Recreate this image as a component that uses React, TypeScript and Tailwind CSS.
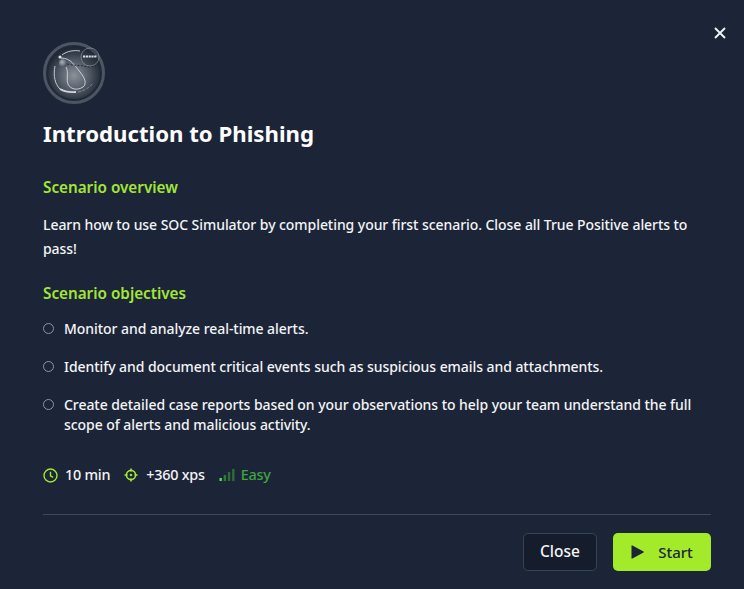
import React from "react";

function Logo() {
  return (
    <svg width="62" height="62" viewBox="0 0 62 62" className="block">
      <defs>
        <radialGradient id="g" cx="0.5" cy="0.55" r="0.55">
          <stop offset="0" stopColor="#8b929b" />
          <stop offset="0.5" stopColor="#555d69" />
          <stop offset="1" stopColor="#1d2431" />
        </radialGradient>
        <radialGradient id="b" cx="0.4" cy="0.4" r="0.6">
          <stop offset="0" stopColor="#aab2bd" />
          <stop offset="1" stopColor="#4b5462" />
        </radialGradient>
      </defs>
      <circle cx="31" cy="31" r="29.5" fill="#1f2937" stroke="#4d5563" strokeWidth="3" />
      <circle cx="31" cy="31" r="26" fill="url(#g)" />
      <path d="M12 24C10 34 12 42 17 47" fill="none" stroke="#c4cad2" strokeWidth="1" />
      <path d="M17 47C24 51 28 50 33 50" fill="none" stroke="#d2d6dc" strokeWidth="1.8" />
      <path d="M35 50C41 49 46 46 50 41" fill="none" stroke="#8e959f" strokeWidth="0.8" strokeDasharray="3 1.5" />
      <path d="M19 13C24 9 31 8 37 9" fill="none" stroke="#c4cad2" strokeWidth="1" />
      <path d="M18 16C28 16 32 24 37 30C42 36 44 42 40 45C34 49 27 47 25 42C23 37 26 31 23 25" fill="none" stroke="#d6dae0" strokeWidth="0.9" />
      <path d="M24 22C32 24 40 23 44 25L53 24" fill="none" stroke="#171d2b" strokeWidth="0.8" strokeDasharray="2 1.5" />
      <circle cx="20" cy="21" r="4" fill="url(#b)" />
      <circle cx="17" cy="15" r="1.5" fill="#e5e7eb" />
      <circle cx="47" cy="15" r="9" fill="#2b3340" fillOpacity="0.35" stroke="#9aa1ab" strokeWidth="0.6" />
      <path d="M40 14.5H54" fill="none" stroke="#d8dce2" strokeWidth="2.2" strokeDasharray="2.2 0.6" />
    </svg>
  );
}

function Dot() {
  return <span className="mt-[4px] h-[11px] w-[11px] shrink-0 rounded-full border border-[#8d95a1]" />;
}

export default function App() {
  const items = [
    "Monitor and analyze real-time alerts.",
    "Identify and document critical events such as suspicious emails and attachments.",
    "Create detailed case reports based on your observations to help your team understand the full scope of alerts and malicious activity.",
  ];
  return (
    <div
      className="relative h-[589px] w-[744px] overflow-hidden bg-[#1c2538] pl-[43px] pr-[33px] pt-[42px] text-[#f3f4f6]"
      style={{ fontFamily: '"Noto Sans", sans-serif' }}
    >
      <button className="absolute right-[17px] top-[26px] text-[#f3f5fa]" aria-label="close">
        <svg width="14" height="14" viewBox="0 0 14 14" fill="none" stroke="currentColor" strokeWidth="1.8">
          <path d="M2 2l10 10M12 2L2 12" />
        </svg>
      </button>
      <Logo />
      <h1 className="mt-[14px] text-[22.2px] font-bold leading-[32px] text-white">Introduction to Phishing</h1>
      <h2 className="mt-[25px] text-[15.25px] font-semibold leading-[24px] text-[#a3e635]">Scenario overview</h2>
      <p className="mt-[14px] max-w-[650px] text-[14px] font-medium leading-[24px] tracking-[-0.06px]">
        Learn how to use SOC Simulator by completing your first scenario. Close all True Positive alerts to pass!
      </p>
      <h2 className="mt-[20px] text-[15.25px] font-semibold leading-[24px] text-[#a3e635]">Scenario objectives</h2>
      <ul className="mt-[14px] flex flex-col gap-[18px]">
        {items.map((t) => (
          <li key={t} className="flex gap-[10px] text-[14px] font-medium leading-[20px] tracking-[-0.06px]">
            <Dot />
            <span>{t}</span>
          </li>
        ))}
      </ul>
      <div className="mt-[28px] flex items-center text-[14.4px] font-medium leading-[24px] tracking-[-0.25px]">
        <svg width="15" height="15" viewBox="0 0 15 15" fill="none" stroke="#a3e635" strokeWidth="1.4" className="mr-[7px]">
          <circle cx="7.5" cy="7.5" r="6.5" />
          <path d="M7.5 3.8v4l2.6 1.6" />
        </svg>
        <span>10 min</span>
        <svg width="14" height="14" viewBox="0 0 14 14" fill="none" stroke="#a3e635" strokeWidth="1.6" className="ml-[14px] mr-[8px]">
          <circle cx="7" cy="7" r="4.6" />
          <path d="M7 0.5v3M7 10.5v3M0.5 7h3M10.5 7h3" />
          <circle cx="7" cy="7" r="0.5" fill="#a3e635" />
        </svg>
        <span>+360 xps</span>
        <svg width="16" height="14" viewBox="0 0 16 14" className="ml-[14px] mr-[6px]">
          <rect x="0.5" y="10" width="2.4" height="3" fill="#4ade50" />
          <rect x="4.7" y="7" width="2.4" height="6" fill="#2f7a33" />
          <rect x="8.9" y="4" width="2.4" height="9" fill="#2f6b33" />
          <rect x="13.1" y="1" width="2.4" height="12" fill="#2f6b33" />
        </svg>
        <span className="text-[#3fa63f]">Easy</span>
      </div>
      <div className="mt-[27px] h-px bg-[#414957]" />
      <div className="mt-[18px] flex justify-end gap-4">
        <button className="flex h-[38px] w-[74px] items-center justify-center rounded-[5px] border border-[#394152] bg-[#151c2b] text-[15.5px] font-medium text-[#f3f4f6]">
          Close
        </button>
        <button className="flex h-[38px] w-[98px] items-center justify-center gap-[14px] rounded-[5px] bg-[#a3ea2a] text-[15px] font-medium text-[#1c2538]">
          <svg width="13" height="14" viewBox="0 0 13 14" fill="currentColor">
            <path d="M0.5 1v12a.6.6 0 0 0 .9.5L12.5 7.5a.6.6 0 0 0 0-1L1.4.5A.6.6 0 0 0 .5 1z" />
          </svg>
          Start
        </button>
      </div>
    </div>
  );
}
